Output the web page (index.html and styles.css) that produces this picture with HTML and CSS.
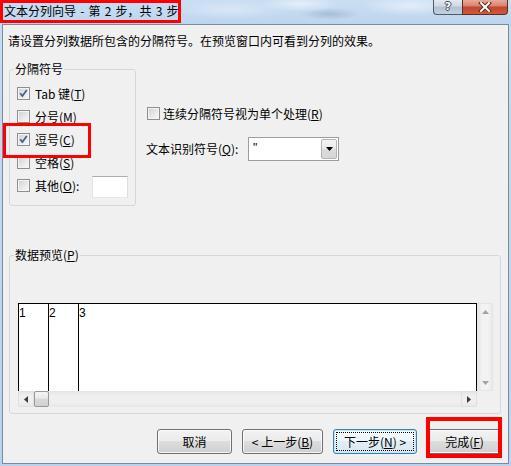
FILE: index.html
```html
<!DOCTYPE html>
<html lang="zh-CN">
<head>
<meta charset="utf-8">
<title>文本分列向导</title>
<link rel="stylesheet" href="styles.css">
</head>
<body>
<div class="window">
  <div class="titlebar">
    <div class="title">文本分列向导 - 第 2 步，共 3 步</div>
    <div class="caption-buttons">
      <div class="cap-btn help"><span class="help-glyph">?</span></div>
      <div class="cap-btn close">
        <svg width="14" height="10" viewBox="0 0 14 10"><path d="M3 1 L11 9 M11 1 L3 9" stroke="#5b2b22" stroke-width="4" stroke-linecap="square"/><path d="M3 1 L11 9 M11 1 L3 9" stroke="#ffffff" stroke-width="2" stroke-linecap="square"/></svg>
      </div>
    </div>
  </div>
  <div class="client">
    <p class="intro">请设置分列数据所包含的分隔符号。在预览窗口内可看到分列的效果。</p>
    <div class="options">
      <fieldset class="group delimiters">
        <legend>分隔符号</legend>
        <div class="check-row"><span class="checkbox"><svg width="11" height="11" viewBox="0 0 11 11"><path d="M2.2 5.2 L4.4 8 L8.8 2" fill="none" stroke="#4b5f8c" stroke-width="1.8"/></svg></span><span>Tab 键(<u>T</u>)</span></div>
        <div class="check-row"><span class="checkbox"></span><span>分号(<u>M</u>)</span></div>
        <div class="check-row"><span class="checkbox"><svg width="11" height="11" viewBox="0 0 11 11"><path d="M2.2 5.2 L4.4 8 L8.8 2" fill="none" stroke="#4b5f8c" stroke-width="1.8"/></svg></span><span>逗号(<u>C</u>)</span></div>
        <div class="check-row"><span class="checkbox"></span><span>空格(<u>S</u>)</span></div>
        <div class="check-row other-row"><span class="checkbox"></span><span class="other-label">其他(<u>O</u>):</span><span class="textbox"></span></div>
      </fieldset>
      <div class="right-col">
        <div class="consecutive"><span class="checkbox"></span><span>连续分隔符号视为单个处理(<u>R</u>)</span></div>
        <div class="qualifier">
          <span class="q-label">文本识别符号(<u>Q</u>):</span>
          <div class="combo">
            <span class="combo-value">"</span>
            <span class="combo-btn"><svg width="7" height="4" viewBox="0 0 7 4"><path d="M0 0 H7 L3.5 4 Z" fill="#000"/></svg></span>
          </div>
        </div>
      </div>
    </div>
    <fieldset class="group preview-group">
      <legend>数据预览(<u>P</u>)</legend>
      <div class="preview">
        <div class="data">
          <div class="cell">1</div>
          <div class="cell">2</div>
          <div class="cell last">3</div>
        </div>
        <div class="vscroll">
          <span class="sb-btn"><svg width="7" height="4" viewBox="0 0 7 4"><path d="M0 4 H7 L3.5 0 Z" fill="#a2a2a2"/></svg></span>
          <span class="sb-btn"><svg width="7" height="4" viewBox="0 0 7 4"><path d="M0 0 H7 L3.5 4 Z" fill="#a2a2a2"/></svg></span>
        </div>
        <div class="hscroll">
          <span class="sb-btn hbtn"><svg width="4" height="7" viewBox="0 0 4 7"><path d="M4 0 V7 L0 3.5 Z" fill="#3c3c3c"/></svg></span>
          <span class="thumb"></span>
          <span class="track"></span>
          <span class="sb-btn hbtn"><svg width="4" height="7" viewBox="0 0 4 7"><path d="M0 0 V7 L4 3.5 Z" fill="#3c3c3c"/></svg></span>
        </div>
        <div class="corner"></div>
      </div>
    </fieldset>
    <div class="buttons">
      <button class="btn btn-cancel">取消</button>
      <button class="btn btn-back">&lt; 上一步(<u>B</u>)</button>
      <button class="btn btn-next"><span class="focus">下一步(<u>N</u>) &gt;</span></button>
      <button class="btn btn-finish">完成(<u>F</u>)</button>
    </div>
  </div>
  <div class="mark mark-title"></div>
  <div class="mark mark-comma"></div>
  <div class="mark mark-finish"></div>
</div>
</body>
</html>
```
FILE: styles.css
```css
* { box-sizing: border-box; }
html, body { margin: 0; padding: 0; }
body {
  width: 511px;
  height: 466px;
  overflow: hidden;
  font-family: "Noto Sans CJK SC", "Noto Sans", sans-serif;
  font-size: 12px;
  line-height: 16px;
  color: #000;
  background: #bcd4ed;
}
u { text-decoration: underline; text-underline-offset: 1px; }

.window {
  position: relative;
  width: 511px;
  height: 466px;
  display: flex;
  flex-direction: column;
  background: linear-gradient(180deg, #c6dcf2 0%, #bad2ec 100%);
}

.titlebar {
  height: 24px;
  flex: none;
  display: flex;
  align-items: flex-start;
  background:
    radial-gradient(ellipse 40px 8px at 300px 4px, rgba(255,255,255,0.55), rgba(255,255,255,0)),
    radial-gradient(ellipse 30px 6px at 330px 14px, rgba(120,140,170,0.35), rgba(120,140,170,0)),
    radial-gradient(ellipse 50px 10px at 410px 6px, rgba(255,255,255,0.5), rgba(255,255,255,0)),
    radial-gradient(ellipse 60px 10px at 230px 10px, rgba(255,255,255,0.35), rgba(255,255,255,0)),
    linear-gradient(180deg, #c9def3 0%, #bdd5ee 100%);
}
.title {
  padding: 3px 0 0 4px;
  white-space: nowrap;
  word-spacing: 1.5px;
}
.caption-buttons {
  margin-left: auto;
  margin-right: 3px;
  display: flex;
}
.cap-btn {
  height: 15px;
  display: flex;
  align-items: center;
  justify-content: center;
  border: 1px solid #4c5a6c;
  border-top: none;
}
.help {
  width: 29px;
  border-right: none;
  border-radius: 0 0 0 4px;
  background: linear-gradient(180deg, #e2e9f1 0%, #cdd7e2 45%, #b2c1d2 50%, #c3d0de 100%);
}
.help-glyph {
  font-family: "DejaVu Sans", sans-serif;
  font-weight: bold;
  font-size: 11px;
  line-height: 12px;
  color: #fff;
  text-shadow: 1px 0 0 #3e4a5a, -1px 0 0 #3e4a5a, 0 1px 0 #3e4a5a, 0 -1px 0 #3e4a5a;
}
.close {
  width: 46px;
  border-color: #5a2f2a;
  border-radius: 0 0 4px 0;
  background: linear-gradient(180deg, #e8aa9b 0%, #d98670 40%, #c4462e 52%, #cf5a3c 100%);
}

.client {
  flex: none;
  height: 440px;
  margin: 0 2px;
  border: 1px solid #7a8aa0;
  background: #f0f0f0;
  display: flex;
  flex-direction: column;
}
.intro {
  margin: 8px 0 0 5px;
  white-space: nowrap;
}

.options {
  display: flex;
  margin-top: 12px;
}

.group {
  margin: 0;
  min-width: 0;
  border: 1px solid #d3d8dd;
  border-radius: 3px;
}
.group legend {
  padding: 0 1px;
  line-height: 16px;
}

.delimiters {
  width: 127px;
  margin-left: 6px;
  padding: 5px 0 8px 4px;
}
.check-row {
  display: flex;
  align-items: center;
  height: 23px;
  margin-left: 3px;
  white-space: nowrap;
}
.check-row .checkbox { margin-right: 5px; }

.checkbox {
  flex: none;
  width: 13px;
  height: 13px;
  border: 1px solid #8e8f8f;
  background: linear-gradient(135deg, #cfcfcf 0%, #e9e9e9 55%, #f8f8f8 100%);
  box-shadow: inset 0 0 0 1px #f4f4f4;
  display: flex;
  align-items: center;
  justify-content: center;
}
.checkbox svg { display: block; }

.other-label { width: 57px; }
.textbox {
  align-self: flex-start;
  margin-top: 2px;
  width: 36px;
  height: 22px;
  background: #fff;
  border: 1px solid #abadb3;
  border-color: #abadb3 #dbdfe6 #e3e9ef #e2e3ea;
}

.right-col {
  margin-left: 10px;
  padding-top: 41px;
}
.consecutive {
  display: flex;
  align-items: center;
  height: 23px;
  margin-left: 1px;
  white-space: nowrap;
}
.consecutive .checkbox { margin-right: 3px; }

.qualifier {
  display: flex;
  align-items: center;
  margin-top: 12px;
  height: 24px;
}
.q-label {
  width: 102px;
  white-space: nowrap;
}
.combo {
  width: 91px;
  height: 24px;
  border: 1px solid #9c9c9c;
  background: #fff;
  display: flex;
}
.combo-value {
  flex: 1;
  padding: 3px 0 0 4px;
  font-family: "Liberation Sans", sans-serif;
  font-size: 12px;
  line-height: 14px;
}
.combo-btn {
  width: 16px;
  margin: 1px 1px 1px 0;
  border: 1px solid #b4b4b4;
  border-radius: 2px;
  background: linear-gradient(180deg, #f4f4f4 0%, #e9e9e9 50%, #dcdcdc 51%, #d6d6d6 100%);
  display: flex;
  align-items: center;
  justify-content: center;
}

.preview-group {
  width: 492px;
  margin-top: 41px;
  margin-left: 6px;
  padding: 40px 0 6px 4px;
}
.preview {
  margin-left: 4px;
  width: 475px;
  display: grid;
  grid-template-columns: 459px 16px;
  grid-template-rows: 88px 16px;
}
.data {
  background: #fff;
  border: 1px solid #000;
  border-bottom: none;
  display: flex;
  font-family: "Liberation Sans", sans-serif;
  font-size: 12px;
  line-height: 14px;
}
.cell {
  width: 30px;
  border-right: 1px solid #000;
  padding: 2px 0 0 0;
}
.cell.last {
  flex: 1;
  border-right: none;
}
.vscroll {
  background: linear-gradient(90deg, #e6e6e6 0%, #f3f3f3 30%, #f3f3f3 70%, #e9e9e9 100%);
  border: 1px solid #e4e4e4;
  display: flex;
  flex-direction: column;
  justify-content: space-between;
}
.sb-btn {
  height: 16px;
  display: flex;
  align-items: center;
  justify-content: center;
}
.vscroll .sb-btn { height: 15px; }
.hscroll {
  display: flex;
  background: linear-gradient(180deg, #e4e4e4 0%, #efefef 30%, #efefef 70%, #e7e7e7 100%);
}
.hbtn {
  width: 16px;
  border: 1px solid #e0e0e0;
  border-radius: 2px;
}
.thumb {
  width: 15px;
  border: 1px solid #989898;
  border-radius: 2px;
  background: linear-gradient(180deg, #f4f4f4 0%, #e8e8e8 45%, #d8d8d8 50%, #d2d2d2 100%);
}
.track { flex: 1; }
.corner { background: #f0f0f0; }

.buttons {
  display: flex;
  justify-content: flex-end;
  gap: 10px;
  margin-top: 15px;
  padding-right: 6px;
}
.btn {
  height: 25px;
  margin: 0;
  padding: 0;
  border: 1px solid #707070;
  border-radius: 3px;
  background: linear-gradient(180deg, #f2f2f2 0%, #ebebeb 48%, #dddddd 50%, #cfcfcf 100%);
  box-shadow: inset 0 0 0 1px rgba(255,255,255,0.75);
  font-family: inherit;
  font-size: 12px;
  line-height: 16px;
  color: #000;
  display: flex;
  align-items: center;
  justify-content: center;
  white-space: nowrap;
}
.btn-cancel { width: 75px; }
.btn-back { width: 81px; }
.btn-next {
  width: 84px;
  padding: 2px;
  border-color: #3c7fb1;
  box-shadow: inset 0 0 0 1px #bfe6fb;
  background: linear-gradient(180deg, #f6fbfe 0%, #eef6fb 48%, #e2eef6 50%, #dbe9f3 100%);
}
.btn-next .focus {
  flex: 1;
  align-self: stretch;
  border: 1px dotted #000;
  display: flex;
  align-items: center;
  justify-content: center;
}
.btn-finish { width: 75px; }

.mark {
  position: absolute;
  border: 3px solid #ff0000;
}
.mark-title { left: 0; top: 0; width: 181px; height: 23px; }
.mark-comma { left: 3px; top: 123px; width: 88px; height: 35px; }
.mark-finish { left: 426px; top: 417px; width: 76px; height: 41px; border-width: 4px; }
```
